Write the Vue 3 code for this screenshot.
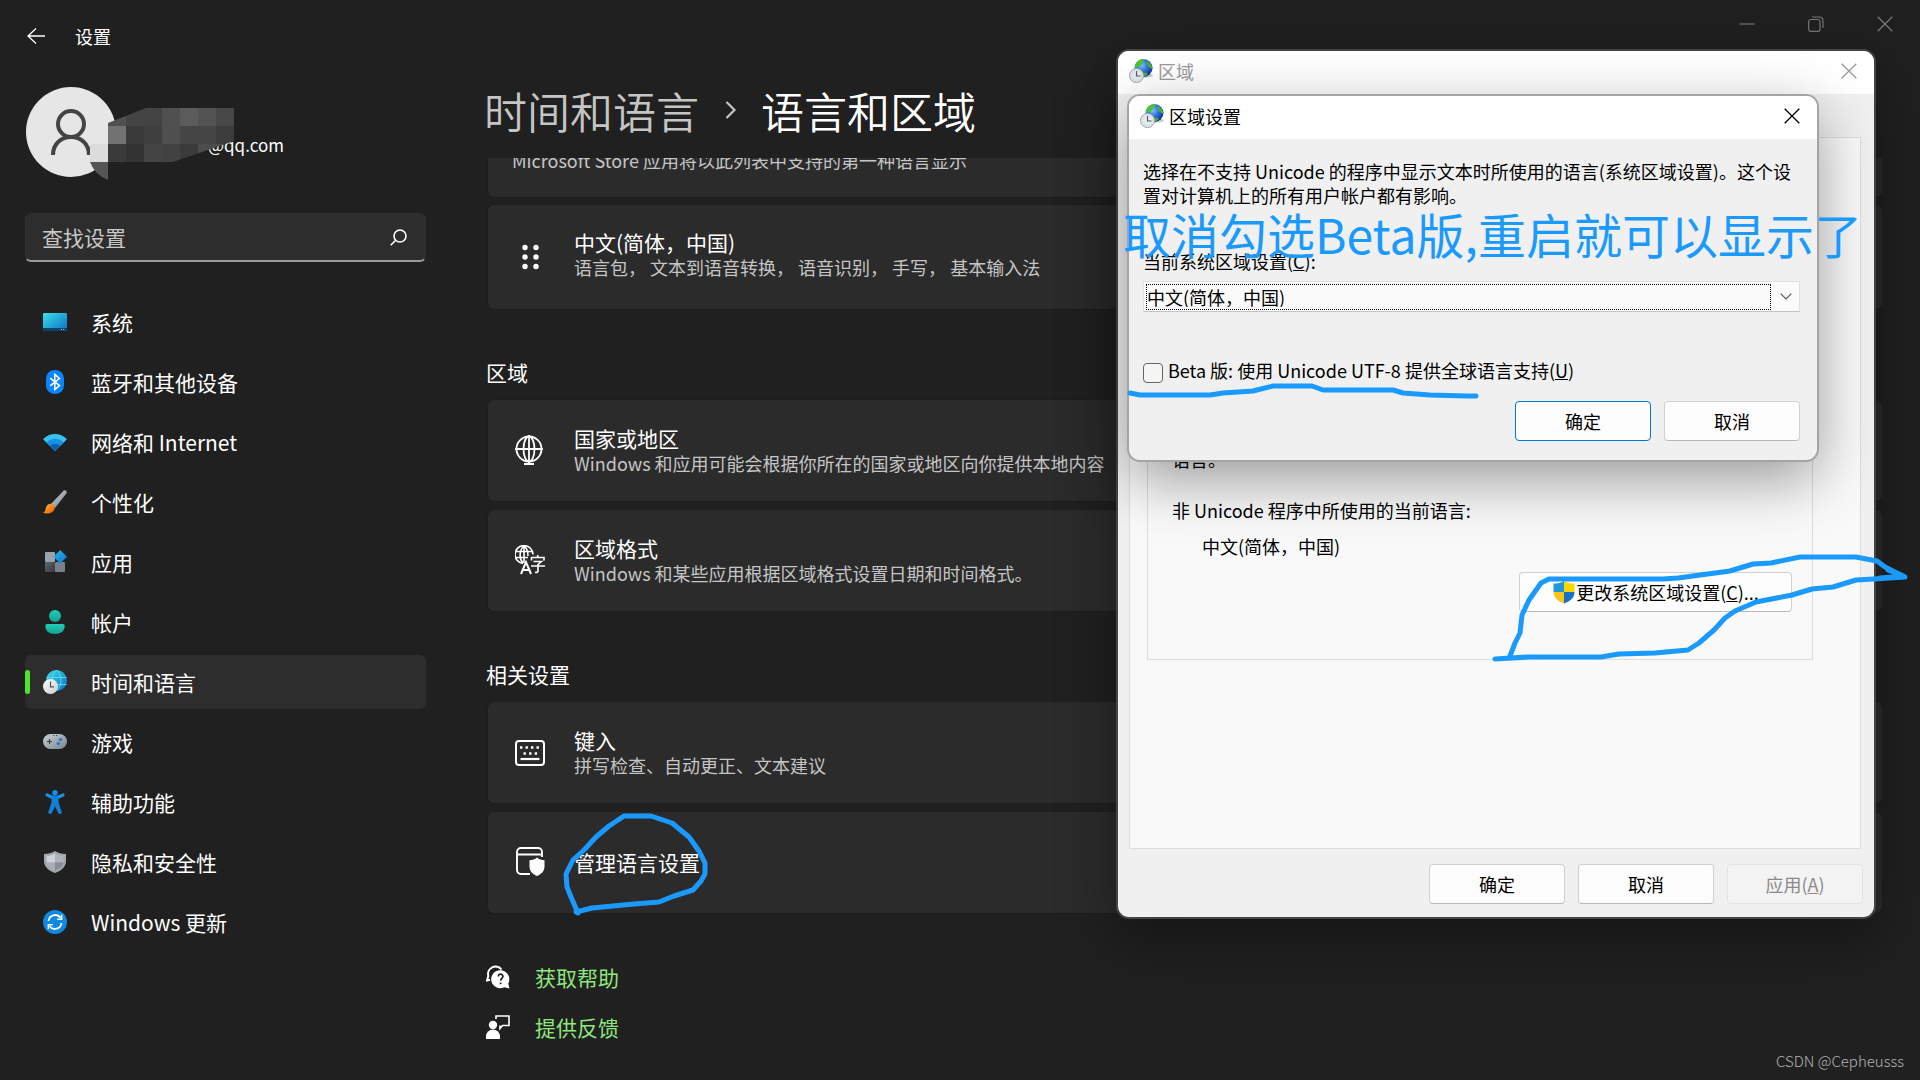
<script setup>
import { ref } from "vue";

const navItems = [
  { name: "系统", icon: "system" },
  { name: "蓝牙和其他设备", icon: "bluetooth" },
  { name: "网络和 Internet", icon: "network" },
  { name: "个性化", icon: "brush" },
  { name: "应用", icon: "apps" },
  { name: "帐户", icon: "account" },
  { name: "时间和语言", icon: "time" },
  { name: "游戏", icon: "gaming" },
  { name: "辅助功能", icon: "access" },
  { name: "隐私和安全性", icon: "privacy" },
  { name: "Windows 更新", icon: "update" },
];

const sections = [
  {
    title: "区域",
    cards: [
      { title: "国家或地区", desc: "Windows 和应用可能会根据你所在的国家或地区向你提供本地内容", icon: "globe" },
      { title: "区域格式", desc: "Windows 和某些应用根据区域格式设置日期和时间格式。", icon: "format" },
    ],
  },
  {
    title: "相关设置",
    cards: [
      { title: "键入", desc: "拼写检查、自动更正、文本建议", icon: "keyboard" },
      { title: "管理语言设置", desc: "", icon: "admin" },
    ],
  },
];

const links = [
  { name: "获取帮助", icon: "help" },
  { name: "提供反馈", icon: "feedback" },
];

// mosaic over the account name: x, y, fill (18px cells)
const mosaic = [
  [18, 0, "#505050"], [36, 0, "#444444"], [54, 0, "#434343"], [72, 0, "#505050"],
  [90, 0, "#5c5c5c"], [108, 0, "#535353"], [126, 0, "#474747"],
  [18, 18, "#727272"], [36, 18, "#3a3a3a"], [54, 18, "#404040"], [72, 18, "#4f4f4f"],
  [90, 18, "#454545"], [108, 18, "#454545"], [126, 18, "#3c3c3c"],
  [0, 36, "#dcdcdc"], [18, 36, "#3a3a3a"], [36, 36, "#333333"], [54, 36, "#444444"],
  [72, 36, "#424242"], [90, 36, "#3b3b3b"], [108, 36, "#4c4c4c"], [126, 36, "#4c4c4c"],
  [0, 54, "#555555"],
];

const active = ref("时间和语言");
const search = ref("");
const locale = ref("zh-CN");
const utf8 = ref(false);
</script>

<template>
  <div class="desktop">
    <svg class="sprite" width="0" height="0" aria-hidden="true">
      <defs>
        <linearGradient id="g-sys" x1="0" y1="0" x2="1" y2="1">
          <stop offset="0" stop-color="#3be0e8" /><stop offset="1" stop-color="#0a6fc4" />
        </linearGradient>
        <linearGradient id="g-blue" x1="0" y1="0" x2="1" y2="1">
          <stop offset="0" stop-color="#2cb8ee" /><stop offset="1" stop-color="#0a72d0" />
        </linearGradient>
        <linearGradient id="g-teal" x1="0" y1="0" x2="0" y2="1">
          <stop offset="0" stop-color="#22cdb8" /><stop offset="1" stop-color="#14a08f" />
        </linearGradient>
        <linearGradient id="g-gray" x1="0" y1="0" x2="1" y2="1">
          <stop offset="0" stop-color="#c8ced3" /><stop offset="1" stop-color="#7b858e" />
        </linearGradient>
        <linearGradient id="g-dark" x1="0" y1="0" x2="1" y2="1">
          <stop offset="0" stop-color="#5e666c" /><stop offset="1" stop-color="#363b40" />
        </linearGradient>
        <linearGradient id="g-fire" x1="0" y1="0" x2="1" y2="1">
          <stop offset="0" stop-color="#ffc022" /><stop offset="1" stop-color="#e8541c" />
        </linearGradient>
        <linearGradient id="g-white" x1="0" y1="0" x2="1" y2="1">
          <stop offset="0" stop-color="#fdfdfd" /><stop offset="1" stop-color="#c9cccf" />
        </linearGradient>
        <radialGradient id="g-earth" cx=".4" cy=".35" r=".7">
          <stop offset="0" stop-color="#7cc4f7" /><stop offset=".5" stop-color="#2c6fd6" /><stop offset="1" stop-color="#10288c" />
        </radialGradient>
      </defs>

      <symbol id="i-system" viewBox="0 0 24 24">
        <rect x="0" y="3" width="24" height="18" rx="1.2" fill="url(#g-sys)" />
        <path d="M0 18h24v1.800a1.200 1.200 0 0 1-1.200 1.200H1.200A1.200 1.200 0 0 1 0 19.800z" fill="#0b4468" />
        <path d="M18 19.500h1M20.200 19.500h1" stroke="#9fd6ee" stroke-width="1" />
      </symbol>
      <symbol id="i-bluetooth" viewBox="0 0 24 24">
        <rect x="3" y="0" width="18" height="24" rx="8.500" fill="#0a84ff" />
        <path d="M7.200 8.200l9.300 7.400-4.700 4V4.400l4.700 4-9.300 7.400" fill="none" stroke="#fff" stroke-width="1.500" />
      </symbol>
      <symbol id="i-network" viewBox="0 0 24 24">
        <path d="M0 9.200C6.500 2.300 17.500 2.300 24 9.200L12 21z" fill="#37c3f2" />
        <path d="M3.400 12.500c5-5 12.200-5 17.200 0L12 21z" fill="#1a90e0" />
        <path d="M6.800 15.900c3-3 7.400-3 10.400 0L12 21z" fill="#0f5fb0" />
      </symbol>
      <symbol id="i-brush" viewBox="0 0 24 24">
        <path d="M8 14L20.500.8c1.500-1.400 4 .4 3 2.400L12 18z" fill="url(#g-gray)" />
        <path d="M8.200 13.800c2.200.4 3.800 2 3.400 4.700C11 22.500 5 25 0 22.800c2.300-.8 2.200-2.500 2.800-4.800.8-2.900 3-4.500 5.400-4.200z" fill="url(#g-fire)" />
      </symbol>
      <symbol id="i-apps" viewBox="0 0 24 24">
        <rect x="2" y="2" width="10" height="10" rx="1" fill="#9aa3ab" />
        <rect x="2" y="12" width="10" height="10" rx="1" fill="url(#g-dark)" />
        <rect x="12" y="12" width="10" height="10" rx="1" fill="#78818a" />
        <path d="M17.200 0L24 6.800l-6.800 6.800-6.800-6.800z" fill="url(#g-blue)" />
      </symbol>
      <symbol id="i-account" viewBox="0 0 24 24">
        <circle cx="12" cy="6" r="6" fill="url(#g-teal)" />
        <path d="M4.300 14h15.400c1.200 0 2 .8 2 2 0 5-4 8-9.700 8s-9.700-3-9.700-8c0-1.200.8-2 2-2z" fill="url(#g-teal)" />
      </symbol>
      <symbol id="i-time" viewBox="0 0 24 24">
        <circle cx="13.500" cy="10.500" r="10.500" fill="url(#g-sys)" />
        <path d="M3.500 7.500h20M3.500 14.500h20M13.500 0c-6 6-6 15 0 21M13.500 0c6 6 6 15 0 21" fill="none" stroke="#5fdcf2" stroke-width=".9" />
        <circle cx="7.500" cy="16.500" r="7.500" fill="url(#g-white)" />
        <path d="M7.500 11.500v5.300h3.600" fill="none" stroke="#555" stroke-width="1.200" />
      </symbol>
      <symbol id="i-gaming" viewBox="0 0 24 24">
        <rect x="0" y="4" width="24" height="15" rx="7.500" fill="url(#g-gray)" />
        <path d="M6.500 9v5M4 11.500h5" stroke="#3a3f44" stroke-width="1.200" />
        <circle cx="17.500" cy="9.500" r="1.600" fill="#0a78d4" /><circle cx="15.300" cy="13.500" r="1.600" fill="#0a78d4" />
        <path d="M10.300 5.500h1M13 5.500h1" stroke="#3a3f44" stroke-width="1" />
      </symbol>
      <symbol id="i-access" viewBox="0 0 24 24">
        <circle cx="12" cy="2.700" r="2.700" fill="#1590e4" />
        <path d="M4 5l5 2.200h6L20 5" fill="none" stroke="#1590e4" stroke-width="3.200" stroke-linecap="round" stroke-linejoin="round" />
        <path d="M8.500 6h7v6.500l3 9a1.700 1.700 0 0 1-3.200 1.500L12 16.500 8.700 23a1.700 1.700 0 0 1-3.200-1.500l3-9z" fill="#0f7fd8" />
      </symbol>
      <symbol id="i-privacy" viewBox="0 0 24 24">
        <path d="M12 1c3 2 6.500 3 11 3v7c0 6-4.500 9.500-11 12C5.500 20.500 1 17 1 11V4c4.500 0 8-1 11-3z" fill="#a2a8ae" />
        <path d="M12 3.500v9H3.500V6c3.500-.2 6-1 8.500-2.500z" fill="#cfd3d7" /><path d="M12 3.500c2.500 1.500 5 2.300 8.500 2.500v6.500H12z" fill="#aeb4ba" />
        <path d="M3.500 12.500H12V20.500c-5-2-8-4.500-8.500-8z" fill="#a9afb5" /><path d="M12 12.500h8.500c-.5 3.500-3.500 6-8.500 8z" fill="#868d94" />
      </symbol>
      <symbol id="i-update" viewBox="0 0 24 24">
        <circle cx="12" cy="12" r="12" fill="#1089e0" />
        <path d="M5.500 11a6.700 6.700 0 0 1 12-3.300M18.500 13a6.700 6.700 0 0 1-12 3.300" fill="none" stroke="#fff" stroke-width="1.800" />
        <path d="M18.600 4.800v4.400h-4.400M5.400 19.200v-4.400h4.400" fill="none" stroke="#fff" stroke-width="1.600" />
      </symbol>

      <symbol id="i-globe" viewBox="0 0 30 30">
        <g fill="none" stroke="#fff" stroke-width="1.800">
          <circle cx="14" cy="14" r="12.500" /><ellipse cx="14" cy="14" rx="5.500" ry="12.500" />
          <path d="M0 14h28M14 0v29M9 29h10" />
        </g>
      </symbol>
      <symbol id="i-format" viewBox="0 0 30 30">
        <g fill="none" stroke="#fff" stroke-width="1.600">
          <path d="M8 18.500A9 9 0 1 1 18 9.500M9 1c-5 4-5 13-1 17M9 1c3 2 4 5 4 10M9 1v17M1 6.500h16M1 12.500h12" />
          <path d="M6 29l5-12 5 12M8 25h6" stroke-width="2" />
          <path d="M16.500 15.500v-3h12.500v3M22.700 10v2.500M18.500 16.500h8l-3.500 3v6.500q0 1.500-3 1.500M16 21h14" />
        </g>
      </symbol>
      <symbol id="i-keyboard" viewBox="0 0 30 30">
        <rect x="1" y="4" width="28" height="24" rx="3" fill="none" stroke="#fff" stroke-width="2" />
        <path d="M5 10.500h22" stroke="#fff" stroke-width="2.400" stroke-dasharray="2.400 3.100" />
        <path d="M8.500 16.500h14" stroke="#fff" stroke-width="2.400" stroke-dasharray="2.400 3.200" />
        <path d="M5.500 22h19" stroke="#fff" stroke-width="2.200" />
      </symbol>
      <symbol id="i-admin" viewBox="0 0 30 30">
        <path d="M15 27H6a4 4 0 0 1-4-4V5a4 4 0 0 1 4-4h17a4 4 0 0 1 4 4v5M2 7.500h25" fill="none" stroke="#fff" stroke-width="1.900" />
        <path d="M22 10.500c2.200 1.800 4.300 2.700 7.500 2.800v6.200c0 4.500-2.800 7.500-7.500 9.500-4.700-2-7.500-5-7.500-9.500v-6.200c3.200-.1 5.300-1 7.500-2.800z" fill="#fff" />
      </symbol>
      <symbol id="i-help" viewBox="0 0 24 24">
        <path d="M15.500 4.500A7.500 7.500 0 0 0 2.300 11L1 15.500l3-.8" fill="none" stroke="#fff" stroke-width="2" />
        <path d="M14.500 5.200a9 9 0 1 0 3.800 17l5.200 1.400-1.300-5A9 9 0 0 0 14.500 5.200z" fill="#fff" />
        <path d="M12.300 11.500c0-3.200 4.800-3 4.600 0-.1 1.900-2.300 2-2.300 4.300M14.600 17.500v1.800" fill="none" stroke="#202020" stroke-width="1.700" />
      </symbol>
      <symbol id="i-feedback" viewBox="0 0 24 24">
        <circle cx="7" cy="10" r="4.200" fill="#fff" />
        <path d="M0 24v-2.500a7 7 0 0 1 14 0V24z" fill="#fff" />
        <path d="M10 4V1h13v9.500h-6.500L14 13.500v-3" fill="none" stroke="#fff" stroke-width="1.600" />
      </symbol>
      <symbol id="i-region" viewBox="0 0 24 24">
        <ellipse cx="16" cy="16.500" rx="8" ry="2" fill="#8d98a3" opacity=".5" />
        <circle cx="14.500" cy="9" r="9" fill="url(#g-earth)" />
        <path d="M7 4c2-3 6-4.500 9-3.500-1 1.500-1 2-2.500 3 0 2-1.500 2.500-3 3.500-1 2-2.500 1-4.500 2 0-2 0-3.500 1-5z" fill="#4fc03c" />
        <path d="M18 2c3 1.500 5.500 4.500 5.300 8-1 0-1.500-1.500-3-1.500-2-1-1-3-3-3.500zM14 14c2-1 4 0 5 1-1 1.500-3 2.500-5 2.500z" fill="#47ad35" />
        <circle cx="7.500" cy="16.500" r="7" fill="#e6ebee" stroke="#98a3aa" />
        <path d="M7.500 12v5h4" fill="none" stroke="#4c5a66" stroke-width="1.100" />
        <circle cx="7.500" cy="16.500" r="5" fill="none" stroke="#9eabb3" stroke-width=".7" stroke-dasharray=".8 1.800" />
      </symbol>
      <symbol id="i-shield" viewBox="0 0 24 24">
        <path d="M12 1c-3 2-6.500 2.500-10.500 2.500V12H12z" fill="#2196d8" /><path d="M12 1c3 2 6.500 2.500 10.500 2.500V12H12z" fill="#ffd500" />
        <path d="M1.500 12H12v11.500C5.500 21 1.500 17.500 1.500 12z" fill="#ffc31a" /><path d="M22.500 12H12v11.500c6.500-2.500 10.500-6 10.500-11.500z" fill="#1672c4" />
      </symbol>
      <symbol id="i-close" viewBox="0 0 16 16">
        <path d="M.7.7l14.600 14.600M15.300.7L.7 15.300" fill="none" stroke="currentColor" stroke-width="1.300" />
      </symbol>
    </svg>

    <!-- Settings window -->
    <header class="titlebar">
      <button class="back" aria-label="返回">
        <svg width="18" height="16" viewBox="0 0 18 16"><path d="M9 .5L1 8l8 7.500M1 8h17" fill="none" stroke="currentColor" stroke-width="1.300" /></svg>
      </button>
      <span class="app-title">设置</span>
      <div class="win-controls">
        <button aria-label="最小化">
          <svg width="16" height="16" viewBox="0 0 16 16"><path d="M.5 8h15" stroke="currentColor" stroke-width="1.200" /></svg>
        </button>
        <button aria-label="还原">
          <svg width="16" height="16" viewBox="0 0 16 16"><g fill="none" stroke="currentColor" stroke-width="1.200"><rect x=".7" y="3.500" width="11.300" height="11.800" rx="2" /><path d="M4 1h7.500a3.500 3.500 0 0 1 3.500 3.500V12" /></g></svg>
        </button>
        <button aria-label="关闭"><svg width="16" height="16"><use href="#i-close" /></svg></button>
      </div>
    </header>

    <div class="body">
      <aside class="sidebar">
        <div class="profile">
          <svg class="avatar" viewBox="0 0 90 90">
            <circle cx="45" cy="45" r="45" fill="#e6e6e6" />
            <g fill="none" stroke="#444" stroke-width="4"><circle cx="45" cy="37" r="13" /><path d="M27 68c0-24 36-24 36 0" /></g>
          </svg>
          <span class="email">@qq.com</span>
          <svg class="mosaic" width="144" height="72" viewBox="0 0 144 72">
            <clipPath id="mosaic-clip"><path d="M18 15L56 0h88v33L83 54H18v18Q5 67 0 54V32l18 4z" /></clipPath>
            <g clip-path="url(#mosaic-clip)" shape-rendering="crispEdges">
              <rect v-for="(c, i) in mosaic" :key="i" :x="c[0]" :y="c[1]" width="18" height="18" :fill="c[2]" />
            </g>
          </svg>
        </div>

        <div class="search">
          <input v-model="search" type="text" placeholder="查找设置" aria-label="查找设置" />
          <svg width="17" height="17" viewBox="0 0 17 17"><g fill="none" stroke="#fff" stroke-width="1.600"><circle cx="10" cy="7" r="6" /><path d="M5.700 11.300L.7 16.300" /></g></svg>
        </div>

        <nav class="nav">
          <a
            v-for="item in navItems"
            :key="item.name"
            href="#"
            :class="['nav-item', { active: active === item.name }]"
            @click.prevent="active = item.name"
          >
            <svg class="nav-icon"><use :href="'#i-' + item.icon" /></svg>
            <span>{{ item.name }}</span>
          </a>
        </nav>
      </aside>

      <main class="content">
        <h1 class="crumbs">
          <a href="#">时间和语言</a>
          <svg width="12" height="18" viewBox="0 0 12 18"><path d="M1.500 1l8 8-8 8" fill="none" stroke="#c5c5c5" stroke-width="2.200" /></svg>
          <span>语言和区域</span>
        </h1>

        <div class="scroller">
          <div class="card preferred">
            <p class="desc">Microsoft Store 应用将以此列表中支持的第一种语言显示</p>
          </div>
          <div class="card language">
            <svg class="card-icon" viewBox="0 0 30 30">
              <g fill="#fff">
                <circle cx="10" cy="5.500" r="2.700" /><circle cx="21" cy="5.500" r="2.700" />
                <circle cx="10" cy="15" r="2.700" /><circle cx="21" cy="15" r="2.700" />
                <circle cx="10" cy="24.500" r="2.700" /><circle cx="21" cy="24.500" r="2.700" />
              </g>
            </svg>
            <div class="card-text">
              <p class="title">中文(简体，中国)</p>
              <p class="desc">语言包， 文本到语音转换， 语音识别， 手写， 基本输入法</p>
            </div>
          </div>

          <section v-for="section in sections" :key="section.title" class="section">
            <h2>{{ section.title }}</h2>
            <div class="cards">
              <a v-for="card in section.cards" :key="card.title" href="#" class="card">
                <svg class="card-icon"><use :href="'#i-' + card.icon" /></svg>
                <div class="card-text">
                  <p class="title">{{ card.title }}</p>
                  <p v-if="card.desc" class="desc">{{ card.desc }}</p>
                </div>
              </a>
            </div>
          </section>

          <div class="links">
            <a v-for="link in links" :key="link.name" href="#">
              <svg width="24" height="24"><use :href="'#i-' + link.icon" /></svg>
              <span>{{ link.name }}</span>
            </a>
          </div>
        </div>
      </main>
    </div>

    <!-- Region dialog -->
    <div class="dialog region" role="dialog" aria-label="区域">
      <div class="dialog-bar inactive">
        <svg width="24" height="24"><use href="#i-region" /></svg>
        <span>区域</span>
        <button aria-label="关闭"><svg width="16" height="16"><use href="#i-close" /></svg></button>
      </div>
      <div class="tab-page">
        <div class="group">
          <p>语言。</p>
          <p class="current">非 Unicode 程序中所使用的当前语言:</p>
          <p class="value">中文(简体，中国)</p>
          <button class="btn wide">
            <svg width="24" height="24"><use href="#i-shield" /></svg>
            <span>更改系统区域设置(<u>C</u>)...</span>
          </button>
        </div>
      </div>
      <div class="actions">
        <button class="btn">确定</button>
        <button class="btn">取消</button>
        <button class="btn" disabled>应用(<u>A</u>)</button>
      </div>
    </div>

    <!-- Region settings dialog -->
    <div class="dialog locale" role="dialog" aria-label="区域设置">
      <div class="dialog-bar">
        <svg width="24" height="24"><use href="#i-region" /></svg>
        <span>区域设置</span>
        <button aria-label="关闭"><svg width="16" height="16"><use href="#i-close" /></svg></button>
      </div>
      <div class="locale-body">
        <p>选择在不支持 Unicode 的程序中显示文本时所使用的语言(系统区域设置)。这个设置对计算机上的所有用户帐户都有影响。</p>
        <label class="combo-label" for="locale">当前系统区域设置(<u>C</u>):</label>
        <div class="combo">
          <select id="locale" v-model="locale">
            <option value="zh-CN">中文(简体，中国)</option>
          </select>
          <svg width="12" height="7" viewBox="0 0 12 7"><path d="M.7.7L6 6 11.300.7" fill="none" stroke="#555" stroke-width="1.200" /></svg>
        </div>
        <label class="check">
          <input v-model="utf8" type="checkbox" />
          <span>Beta 版: 使用 Unicode UTF-8 提供全球语言支持(<u>U</u>)</span>
        </label>
        <div class="actions">
          <button class="btn primary">确定</button>
          <button class="btn">取消</button>
        </div>
      </div>
    </div>

    <!-- Hand-drawn notes -->
    <p class="note">取消勾选Beta版,重启就可以显示了</p>
    <svg class="ink" width="1920" height="1080" viewBox="0 0 1920 1080" aria-hidden="true">
      <g fill="none" stroke="#1a9aff" stroke-width="5" stroke-linecap="round" stroke-linejoin="round">
        <path d="M1130 393L1140 395H1177L1210 395 1223 393 1253 391 1273 386H1312L1323 390H1393L1403 393 1430 395 1467 396 1476 396" />
        <path d="M1495 659L1528 657H1601L1619 654 1655 653 1688 650 1699 643 1714 630 1725 618 1735 611 1756 602 1792 595 1812 589 1833 587 1856 580 1874 579 1905 577 1885 567 1877 561 1856 557H1800L1771 563 1753 564 1730 571 1678 578 1663 579H1549L1541 583 1529 600 1522 615 1520 633 1515 643 1510 656" />
        <path d="M1888 570L1903 576 1880 578" />
        <path d="M576 912L592 908 613 906 634 904 659 902 674 896 693 890 701 881 705 874V863L699 851 689 837 672 823 651 816H624L609 826 596 837 584 850 573 860 566 874 567 887 571 897 578 913" />
      </g>
    </svg>
    <span class="watermark">CSDN @Cepheusss</span>
  </div>
</template>

<style>
body {
  background: #202020;
}
</style>

<style scoped>
.desktop {
  position: relative;
  display: flex;
  flex-direction: column;
  min-height: 100vh;
  overflow: hidden;
  background: #202020;
  color: #fff;
  font-family: "Noto Sans CJK SC", "Noto Sans", sans-serif;
  font-size: 18px;
  line-height: 24px;
}
.desktop * {
  box-sizing: border-box;
}
.sprite {
  position: absolute;
}
p, h1, h2 {
  margin: 0;
  font-weight: 400;
}
a {
  color: inherit;
  text-decoration: none;
}
button {
  display: flex;
  align-items: center;
  justify-content: center;
  padding: 0;
  border: none;
  background: none;
  color: inherit;
  font: inherit;
}
svg {
  flex: none;
}

/* ===== Title bar ===== */
.titlebar {
  display: flex;
  align-items: center;
  height: 72px;
  padding: 0 1px 0 27px;
}
.app-title {
  margin-left: 30px;
}
.win-controls {
  display: flex;
  align-self: flex-start;
  margin-left: auto;
  color: #777;
}
.win-controls button {
  width: 69px;
  height: 47px;
}

/* ===== Sidebar ===== */
.body {
  display: flex;
  flex: 1;
}
.sidebar {
  flex: none;
  width: 426px;
  padding: 15px 0 0 25px;
}
.profile {
  position: relative;
  display: flex;
  align-items: center;
  height: 90px;
  margin-left: 1px;
}
.avatar {
  width: 90px;
  height: 90px;
}
.email {
  margin-left: 92px;
  padding-top: 26px;
  font-size: 17px;
}
.mosaic {
  position: absolute;
  left: 64px;
  top: 21px;
}
.search {
  display: flex;
  align-items: center;
  height: 49px;
  margin: 36px 0 33px;
  padding: 0 18px 0 16px;
  border: 1px solid #303030;
  border-bottom: 2px solid #9a9a9a;
  border-radius: 6px;
  background: #2d2d2d;
}
.search input {
  flex: 1;
  min-width: 0;
  padding: 0;
  border: none;
  outline: none;
  background: none;
  color: #fff;
  font: inherit;
  font-size: 21px;
}
.search input::placeholder {
  color: #c8c8c8;
  opacity: 1;
}
.nav {
  display: flex;
  flex-direction: column;
  gap: 6px;
}
.nav-item {
  position: relative;
  display: flex;
  align-items: center;
  gap: 24px;
  height: 54px;
  padding-left: 18px;
  border-radius: 6px;
  font-size: 21px;
}
.nav-item.active {
  background: #2d2d2d;
}
.nav-item.active::before {
  content: "";
  position: absolute;
  left: 0;
  top: 15px;
  width: 5px;
  height: 24px;
  border-radius: 3px;
  background: #4ce62e;
}
.nav-icon {
  width: 24px;
  height: 24px;
}

/* ===== Content ===== */
.content {
  flex: 1;
  min-width: 0;
  padding: 0 38px 0 58px;
}
.crumbs {
  display: flex;
  align-items: center;
  height: 86px;
  padding-bottom: 10px;
  font-size: 43px;
  font-weight: 350;
  line-height: 56px;
}
.crumbs a {
  color: #c5c5c5;
}
.crumbs svg {
  margin: 0 24px 0 26px;
}
.scroller {
  padding-left: 4px;
  overflow: hidden;
}
.card {
  display: flex;
  align-items: center;
  gap: 29px;
  min-height: 101px;
  padding: 0 27px 2px;
  border-radius: 6px;
  background: #2b2b2b;
  box-shadow: 0 0 0 1px #1d1d1d;
}
/* scrolled partly out of view */
.preferred {
  align-items: flex-end;
  margin-top: -62px;
  padding: 0 24px 25px;
}
.language {
  min-height: 104px;
  margin-top: 8px;
  padding-bottom: 0;
}
.language .card-text {
  padding-bottom: 6px;
}
.card-icon {
  width: 30px;
  height: 30px;
}
.title {
  font-size: 21px;
  line-height: 26px;
}
.desc {
  color: #c5c5c5;
}
.section h2 {
  margin: 49px 0 14px -2px;
  font-size: 21px;
  line-height: 28px;
}
.cards {
  display: flex;
  flex-direction: column;
  gap: 9px;
}
.links {
  display: flex;
  flex-direction: column;
  align-items: flex-start;
  margin: 39px 0 0 -2px;
  color: #8fe67c;
  font-size: 21px;
}
.links a {
  display: flex;
  align-items: center;
  gap: 25px;
  height: 50px;
}

/* ===== Dialogs ===== */
.dialog {
  position: absolute;
  display: flex;
  flex-direction: column;
  border-radius: 11px;
  background: #f0f0f0;
  color: #000;
}
.region {
  left: 1118px;
  top: 51px;
  width: 756px;
  height: 866px;
  box-shadow: 0 0 0 2px #444, 0 20px 60px rgba(0, 0, 0, 0.4);
}
.locale {
  left: 1129px;
  top: 96px;
  width: 688px;
  height: 364px;
  box-shadow: 0 0 0 2px #a4a4a4, 0 18px 60px rgba(0, 0, 0, 0.4);
}
.dialog-bar {
  display: flex;
  flex: none;
  align-items: center;
  gap: 5px;
  height: 43px;
  padding: 0 17px 3px 11px;
  border-radius: 11px 11px 0 0;
  background: #fff;
}
.dialog-bar button {
  margin-left: auto;
}
.inactive {
  color: #999;
}
.tab-page {
  flex: 1;
  margin: 43px 13px 0 11px;
  padding: 0 47px 0 17px;
  border: 1px solid #dcdcdc;
  background: #f9f9f9;
}
.group {
  display: flex;
  flex-direction: column;
  height: 522px;
  padding: 309px 20px 0 24px;
  border: 1px solid #dcdcdc;
  border-top: none;
}
.current {
  margin-top: 27px;
}
.value {
  margin: 12px 0 14px 30px;
}
.actions {
  display: flex;
  justify-content: flex-end;
  gap: 13px;
}
.region > .actions {
  padding: 15px 11px 13px;
}
.btn {
  width: 136px;
  height: 40px;
  border: 1px solid #d0d0d0;
  border-bottom-color: #b8b8b8;
  border-radius: 4px;
  background: #fdfdfd;
}
.btn.wide {
  align-self: flex-end;
  width: 273px;
}
.btn.primary {
  border-color: #0078d4;
}
.btn:disabled {
  border-color: #e4e4e4;
  background: #f3f3f3;
  color: #8a8a8a;
}
.locale-body {
  display: flex;
  flex: 1;
  flex-direction: column;
  padding: 20px 17px 19px 14px;
}
.combo-label {
  margin-top: 42px;
}
.combo {
  display: flex;
  align-items: center;
  height: 31px;
  margin-top: 8px;
  padding: 2px 7px 2px 2px;
  border: 1px solid #e0e0e0;
  border-bottom: 1px solid #c4c4c4;
  background: #fbfbfb;
}
.combo select {
  flex: 1;
  height: 26px;
  margin-right: 9px;
  padding: 0 0 2px;
  border: 1px dotted #000;
  border-radius: 0;
  outline: none;
  appearance: none;
  background: none;
  color: #000;
  font: inherit;
}
.check {
  display: flex;
  align-items: flex-start;
  gap: 5px;
  margin-top: 46px;
}
.check input {
  width: 20px;
  height: 20px;
  margin: 5px 0 0;
  border: 1px solid #666;
  border-radius: 4px;
  appearance: none;
  background: #f5f5f5;
}
.check input:checked {
  background: #0078d4;
}
.locale .actions {
  margin-top: auto;
}

/* ===== Notes over the windows ===== */
.note {
  position: absolute;
  left: 1123px;
  top: 201px;
  color: #1a9aff;
  font-size: 48px;
  line-height: 64px;
  white-space: nowrap;
  pointer-events: none;
}
.ink {
  position: absolute;
  left: 0;
  top: 0;
  pointer-events: none;
}
.watermark {
  position: absolute;
  right: 16px;
  bottom: 7px;
  color: #b4b4b4;
  font-size: 15px;
  font-weight: 300;
}
</style>
